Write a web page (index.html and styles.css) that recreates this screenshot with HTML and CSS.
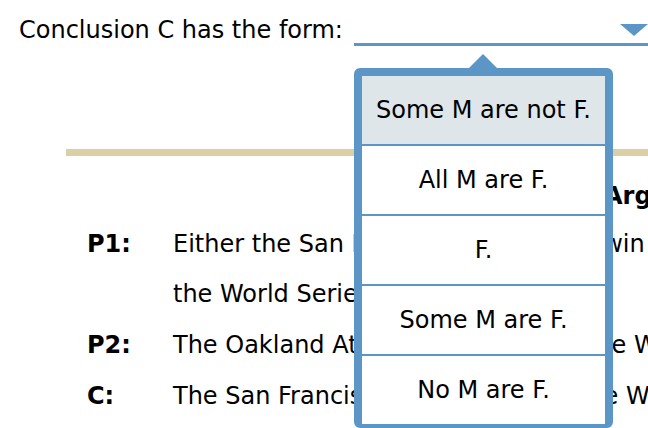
FILE: index.html
```html
<!DOCTYPE html>
<html lang="en">
<head>
<meta charset="utf-8">
<title>Conclusion form</title>
<link rel="stylesheet" href="styles.css">
</head>
<body>
<div class="question">
  <span class="label">Conclusion C has the form:</span>
  <div class="field">
    <span class="arrow"></span>
  </div>
</div>

<div class="card">
  <h2 class="heading">Argument</h2>
  <div class="rows">
    <div class="tag">P1:</div>
    <div class="text">Either the San Francisco Giants will win<br>the World Series.</div>
    <div class="tag">P2:</div>
    <div class="text">The Oakland Athletics will not win the World Series.</div>
    <div class="tag">C:</div>
    <div class="text">The San Francisco Giants will win the World Series.</div>
  </div>
</div>

<ul class="menu">
  <li class="option selected">Some M are not F.</li>
  <li class="option">All M are F.</li>
  <li class="option">F.</li>
  <li class="option">Some M are F.</li>
  <li class="option">No M are F.</li>
</ul>
</body>
</html>
```

FILE: styles.css
```css
html, body {
  margin: 0;
  padding: 0;
  overflow: hidden;
  width: 648px;
  height: 428px;
  background: #ffffff;
}
body {
  font-family: "DejaVu Sans", Verdana, sans-serif;
  font-size: 24px;
  color: #000000;
  position: relative;
}
.question {
  display: flex;
  align-items: flex-start;
  padding: 16px 0 0 19px;
  gap: 11px;
  line-height: 28px;
}
.label {
  white-space: nowrap;
}
.field {
  flex: 0 0 auto;
  width: 294px;
  height: 27px;
  border-bottom: 3px solid #5b96c6;
  display: flex;
  align-items: center;
  justify-content: flex-end;
  padding-right: 4px;
  box-sizing: content-box;
}
.arrow {
  width: 0;
  height: 0;
  border-left: 14px solid transparent;
  border-right: 14px solid transparent;
  border-top: 12px solid #5b96c6;
}
.card {
  margin: 103px 0 0 66px;
  width: 1200px;
  border-top: 7px solid #dbcfa6;
}
.heading {
  margin: 26px 0 0 0;
  padding-left: 538px;
  font-size: 24px;
  font-weight: bold;
  line-height: 28px;
}
.rows {
  margin-top: 9px;
  padding-left: 21px;
  display: grid;
  grid-template-columns: 86px 660px;
  row-gap: 1px;
  line-height: 50px;
}
.tag {
  font-weight: bold;
}
.text {
  white-space: nowrap;
}
.menu {
  position: absolute;
  left: 354px;
  top: 68px;
  width: 259px;
  box-sizing: border-box;
  margin: 0;
  padding: 0;
  list-style: none;
  border: 8px solid #5b96c6;
  border-bottom-width: 4px;
  border-radius: 6px;
  background: #ffffff;
}
.menu::before {
  content: "";
  position: absolute;
  left: 107px;
  top: -22px;
  width: 0;
  height: 0;
  border-left: 14px solid transparent;
  border-right: 14px solid transparent;
  border-bottom: 14px solid #5b96c6;
}
.option {
  height: 68px;
  display: flex;
  align-items: center;
  justify-content: center;
  line-height: 28px;
}
.option + .option {
  border-top: 2px solid #5b96c6;
}
.option.selected {
  background: #dee6ea;
}
```
